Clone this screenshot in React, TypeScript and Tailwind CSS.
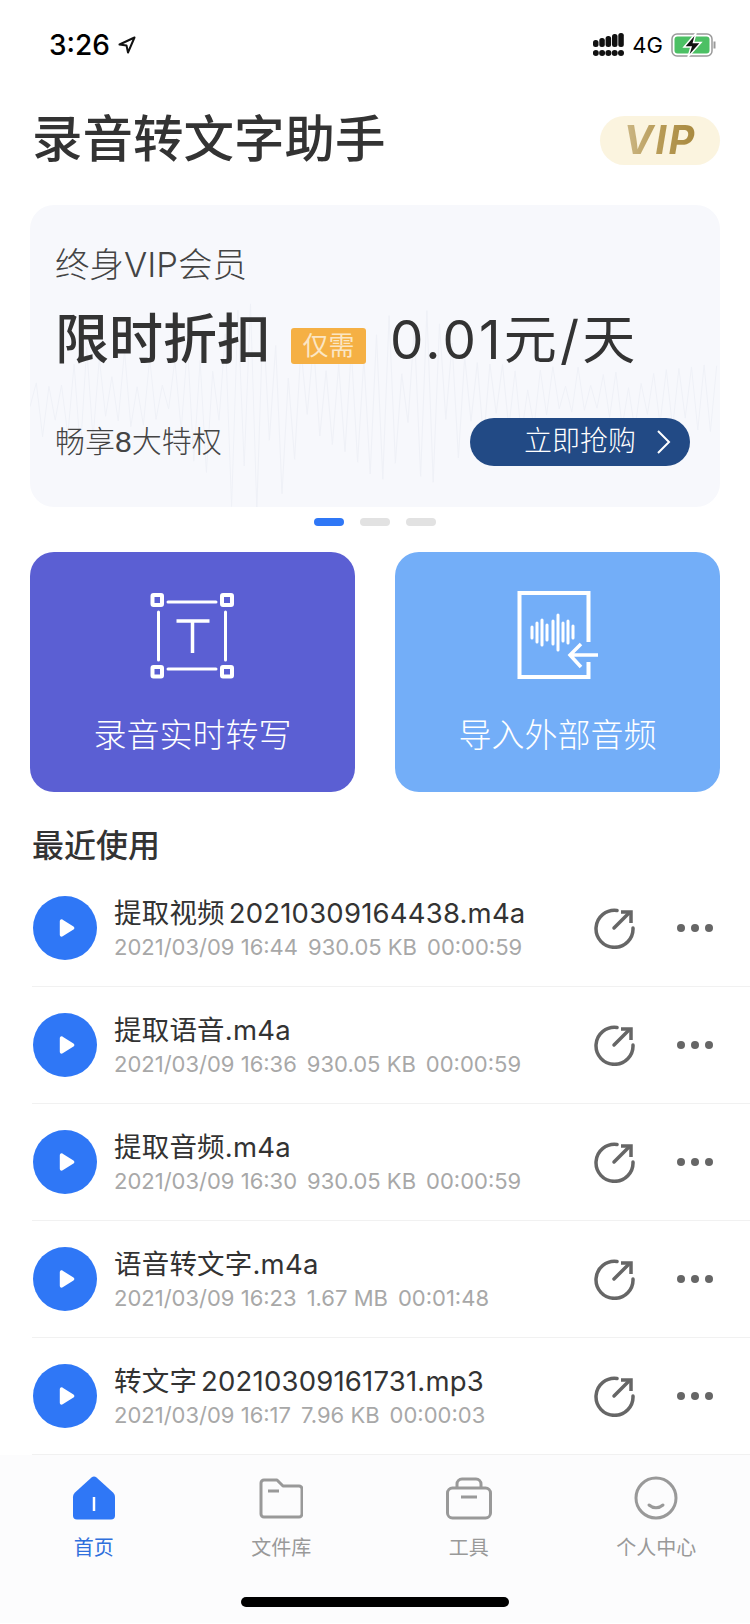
const files = [
  { name: "提取视频 20210309164438.m4a", date: "2021/03/09 16:44", size: "930.05 KB", time: "00:00:59" },
  { name: "提取语音.m4a", date: "2021/03/09 16:36", size: "930.05 KB", time: "00:00:59" },
  { name: "提取音频.m4a", date: "2021/03/09 16:30", size: "930.05 KB", time: "00:00:59" },
  { name: "语音转文字.m4a", date: "2021/03/09 16:23", size: "1.67 MB", time: "00:01:48" },
  { name: "转文字 20210309161731.mp3", date: "2021/03/09 16:17", size: "7.96 KB", time: "00:00:03" },
];

// faint wave behind the banner
const wavePoints = Array.from({ length: 110 }, (_, i) => {
  const env = 30 + 95 * Math.pow(Math.abs(Math.sin(i * 0.031 + 0.25)), 2) * (0.6 + 0.4 * Math.sin(i * 0.23));
  const amp = env * (0.2 + 0.8 * Math.abs(Math.sin(i * i * 0.37)));
  return `${i * 6.3},${i % 2 ? 195 - amp : 195 + amp}`;
}).join(" ");

function StatusBar() {
  return (
    <div className="h-[90px] flex items-center justify-between pl-[49px] pr-[33px] text-black font-['Inter','Liberation_Sans',sans-serif]">
      <div className="flex items-center gap-[8px]">
        <span className="text-[28px] leading-none font-medium">3:26</span>
        <svg width="18" height="18" viewBox="0 0 18 18" fill="none" stroke="#111" strokeWidth="2" strokeLinejoin="round">
          <path d="M16.500 1.500 1.500 8.500 8.500 9.500 10 16.500z" />
        </svg>
      </div>
      <div className="flex items-center">
        <svg width="31" height="24" viewBox="0 0 31 24" fill="#111">
          <rect x="0" y="7" width="5.500" height="7" rx="2.500" />
          <rect x="6.300" y="5" width="5.500" height="9" rx="2.500" />
          <rect x="12.600" y="3" width="5.500" height="11" rx="2.500" />
          <rect x="19" y="1" width="5.500" height="13" rx="2.500" />
          <rect x="25.300" y="0" width="5.500" height="14" rx="2.500" />
          <circle cx="2.800" cy="20" r="3" />
          <circle cx="9.100" cy="20" r="3" />
          <circle cx="15.400" cy="20" r="3" />
          <circle cx="21.700" cy="20" r="3" />
          <circle cx="28" cy="20" r="3" />
        </svg>
        <span className="ml-[8px] text-[22px] leading-none">4G</span>
        <svg className="ml-[8px]" width="46" height="24" viewBox="0 0 46 24" fill="none">
          <rect x="1" y="1" width="40" height="22" rx="5" stroke="#9a9a9a" strokeWidth="1.500" />
          <rect x="3.500" y="3.500" width="35" height="17" rx="3" fill="#4cc064" />
          <path d="M43.500 8.500v7" stroke="#9a9a9a" strokeWidth="2" />
          <path d="M25 0 13 14h7l-3 10L30 9.500h-7.500z" fill="#111" stroke="#fff" strokeWidth="1.500" />
        </svg>
      </div>
    </div>
  );
}

function Banner() {
  return (
    <div className="relative mx-[30px] mt-[15px] h-[302px] rounded-[24px] bg-[#f7f8fc] overflow-hidden pl-[25px] pr-[30px] pt-[43px] text-[#333]">
      <svg className="absolute left-0 top-0" width="690" height="302" viewBox="0 0 690 302" fill="none">
        <polyline points={wavePoints} stroke="#eff1f7" strokeWidth="1" />
      </svg>
      <div className="relative text-[34.500px] leading-[34px] font-light text-[#444] font-['Inter','Noto_Sans_CJK_SC',sans-serif]">终身VIP会员</div>
      <div className="relative mt-[28px] h-[60px] flex items-center font-['Inter','Noto_Sans_CJK_SC',sans-serif]">
        <span className="text-[54px] leading-[60px] font-medium">限时折扣</span>
        <span className="mt-[12px] ml-[20px] w-[75px] h-[36px] rounded-[3px] bg-[#f5b044] text-[#fbe6c4] text-[26px] leading-[36px] text-center">仅需</span>
        <span className="ml-[24px] text-[53px] leading-[60px] tracking-[3.200px]">0.01元/天</span>
      </div>
      <div className="relative mt-[48px] flex items-center justify-between">
        <span className="text-[30px] leading-[48px] font-light text-[#444]">畅享8大特权</span>
        <div className="w-[220px] h-[48px] rounded-full bg-[#224a85] flex items-center pl-[54px] text-white">
          <span className="text-[28px] leading-[48px] font-light">立即抢购</span>
          <svg className="ml-[20px]" width="15" height="26" viewBox="0 0 15 26" fill="none" stroke="#fff" strokeWidth="2">
            <path d="M2 2l11 11L2 24" />
          </svg>
        </div>
      </div>
    </div>
  );
}

function TranscribeIcon() {
  return (
    <svg width="86" height="92" viewBox="0 0 86 92" fill="none" stroke="#fff" strokeWidth="3">
      <rect x="2.500" y="5" width="9.500" height="10" rx="1" strokeWidth="4" />
      <rect x="72" y="5" width="10" height="10" rx="1" strokeWidth="4" />
      <rect x="2.500" y="77" width="9.500" height="9.500" rx="1" strokeWidth="4" />
      <rect x="72" y="77" width="10" height="9.500" rx="1" strokeWidth="4" />
      <path d="M18 12h48M18 79h48M8.500 22v48M75.500 22v48" strokeLinecap="round" />
      <path d="M26.500 31h33M42.500 31v32" strokeWidth="3.500" />
    </svg>
  );
}

function ImportIcon() {
  return (
    <svg width="82" height="92" viewBox="0 0 82 92" fill="none" stroke="#fff" strokeWidth="4">
      <path d="M71.500 52V3H2.500v84h69V72" />
      <path d="M15 37v11M20 33v19M25 30v25M30 35v15M36 31v23M41 25v35M46 33v18M51 31v22M56 36v12" strokeWidth="3" strokeLinecap="round" />
      <path d="M81 65H53M64 54 53 65l11 12" strokeWidth="3.500" />
    </svg>
  );
}

function FileRow({ file }: any) {
  return (
    <div className="ml-[32px] h-[117px] flex items-center border-b border-[#f1f1f1]">
      <div className="ml-[1px] w-[64px] h-[64px] rounded-full bg-[#2f77f6] flex items-center justify-center">
        <svg className="ml-[3px]" width="18" height="20" viewBox="0 0 20 22" fill="#fff">
          <path d="M2 3.500c0-1.800 1.800-2.700 3.200-1.800l12 7.600c1.300.8 1.300 2.600 0 3.400l-12 7.600C3.800 21.200 2 20.300 2 18.500z" />
        </svg>
      </div>
      <div className="ml-[17px] w-[480px] font-['Inter','Noto_Sans_CJK_SC',sans-serif]">
        <div className="text-[27.500px] leading-[34px] text-[#333] tracking-[0.200px] [word-spacing:-4px]">{file.name}</div>
        <div className="mt-[3px] flex gap-[10px] text-[22px] leading-[28px] text-[#a8a8a8]">
          <span>{file.date}</span>
          <span>{file.size}</span>
          <span>{file.time}</span>
        </div>
      </div>
      <svg width="42" height="42" viewBox="0 0 42 42" fill="none" stroke="#666" strokeWidth="3.500">
        <path d="M23 3.500A18.500 18.500 0 1 0 39 21" strokeLinecap="round" />
        <path d="M20 21 35 6" strokeLinecap="round" />
        <path d="M27 5h10v11" />
      </svg>
      <div className="ml-[41px] flex gap-[6px]">
        <div className="w-[8px] h-[8px] rounded-full bg-[#666]" />
        <div className="w-[8px] h-[8px] rounded-full bg-[#666]" />
        <div className="w-[8px] h-[8px] rounded-full bg-[#666]" />
      </div>
    </div>
  );
}

function TabBar() {
  return (
    <div className="h-[168px] bg-[#fcfcfd] pt-[21px]">
      <div className="grid grid-cols-4 text-[20px] leading-[28px] text-[#999] text-center">
        <div className="flex flex-col items-center">
          <svg width="44" height="44" viewBox="0 0 44 44" fill="#2f77f6">
            <path d="M19.500 1.500q2.500-2 5 0L41 16.500c1.500 1.500 2 3 2 5v18a4 4 0 0 1-4 4H5a4 4 0 0 1-4-4v-18c0-2 .5-3.500 2-5z" />
            <path d="M22 21v14" stroke="#fff" strokeWidth="2.500" />
          </svg>
          <span className="mt-[14px] text-[#2f6fdc]">首页</span>
        </div>
        <div className="flex flex-col items-center">
          <svg width="44" height="44" viewBox="0 0 44 44" fill="none" stroke="#999" strokeWidth="3">
            <path d="M2 7a3 3 0 0 1 3-3h13l6 6h16a3 3 0 0 1 3 3v25a3 3 0 0 1-3 3H5a3 3 0 0 1-3-3z" strokeLinejoin="round" />
            <path d="M9 15h11" />
          </svg>
          <span className="mt-[14px]">文件库</span>
        </div>
        <div className="flex flex-col items-center">
          <svg width="46" height="44" viewBox="0 0 46 44" fill="none" stroke="#999" strokeWidth="3">
            <rect x="1.500" y="12" width="43" height="30" rx="5" />
            <path d="M11 12V8a5 5 0 0 1 5-5h14a5 5 0 0 1 5 5v4" />
            <path d="M15 21h16" />
          </svg>
          <span className="mt-[14px]">工具</span>
        </div>
        <div className="flex flex-col items-center">
          <svg width="44" height="44" viewBox="0 0 44 44" fill="none" stroke="#999" strokeWidth="3">
            <circle cx="22" cy="22" r="20" />
            <path d="M15 29c4 3.500 10 3.500 14 0" strokeLinecap="round" />
          </svg>
          <span className="mt-[14px]">个人中心</span>
        </div>
      </div>
      <div className="mt-[35px] mx-auto w-[268px] h-[10px] rounded-full bg-black" />
    </div>
  );
}

export default function App() {
  return (
    <div className="w-[750px] h-[1624px] bg-white overflow-hidden flex flex-col font-['Liberation_Sans','Noto_Sans_CJK_SC',sans-serif]">
      <StatusBar />
      <div className="h-[100px] flex items-center justify-between pl-[32px] pr-[30px]">
        <h1 className="text-[50.500px] leading-none font-medium text-[#333]">录音转文字助手</h1>
        <div className="w-[120px] h-[49px] rounded-full bg-[#fbf4df] flex items-center justify-center">
          <span className="text-[40px] leading-none font-bold italic tracking-[2px] bg-gradient-to-r from-[#cdb988] via-[#b79a55] to-[#a8893f] bg-clip-text text-transparent font-['Inter',sans-serif]">VIP</span>
        </div>
      </div>
      <Banner />
      <div className="mt-[11px] h-[8px] flex justify-center gap-[16px]">
        <div className="w-[30px] rounded-full bg-[#2f77f6]" />
        <div className="w-[30px] rounded-full bg-[#e2e2e2]" />
        <div className="w-[30px] rounded-full bg-[#e2e2e2]" />
      </div>
      <div className="mt-[26px] px-[30px] grid grid-cols-2 gap-[40px]">
        <div className="h-[240px] rounded-[24px] bg-[#5b5fd3] flex flex-col items-center pt-[38px] text-white">
          <TranscribeIcon />
          <div className="mt-[38px] text-[33px] leading-[32px] font-light">录音实时转写</div>
        </div>
        <div className="h-[240px] rounded-[24px] bg-[#73aef8] flex flex-col items-center pt-[38px] text-white">
          <ImportIcon />
          <div className="mt-[38px] text-[33px] leading-[32px] font-light">导入外部音频</div>
        </div>
      </div>
      <div className="mt-[34px] pl-[32px] text-[32px] leading-[40px] font-medium text-[#333]">最近使用</div>
      <div className="mt-[4px]">
        {files.map((file) => (
          <FileRow key={file.name} file={file} />
        ))}
      </div>
      <TabBar />
    </div>
  );
}
